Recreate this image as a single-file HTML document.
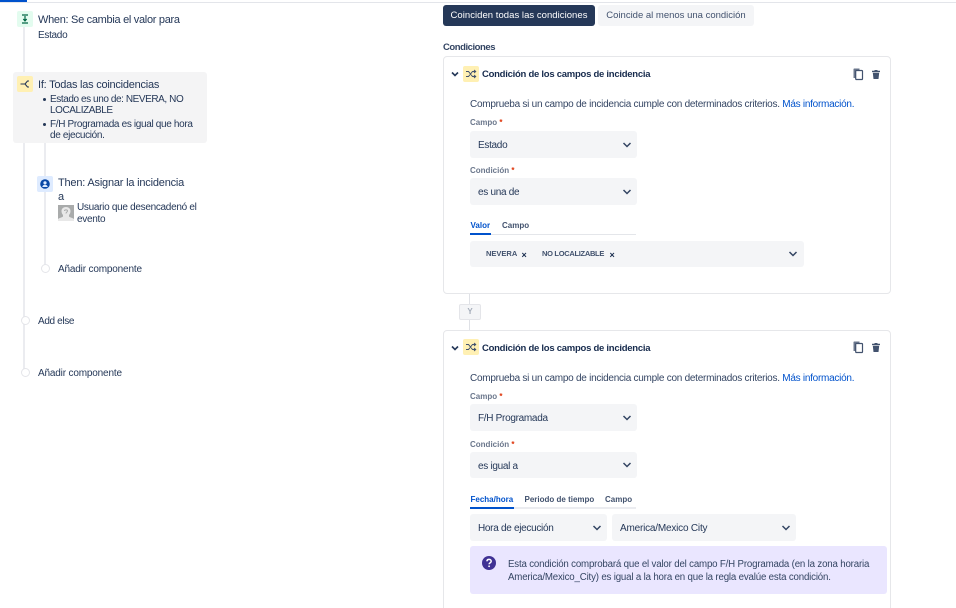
<!DOCTYPE html>
<html><head><meta charset="utf-8"><style>
html,body{margin:0;padding:0;background:#fff;height:608px;overflow:hidden}
body{width:956px;position:relative;font-family:"Liberation Sans",sans-serif;color:#253858;font-size:10px}
.a{position:absolute;white-space:nowrap}
.t{position:absolute;white-space:nowrap;line-height:12px}
.card{position:absolute;left:443px;width:448px;background:#fff;border:1px solid #e6e7ea;border-radius:4px;box-sizing:border-box}
.sel{position:absolute;background:#f4f5f7;border-radius:3px}
.sel span{position:absolute;left:8px;top:14px;line-height:12px;margin-top:-5.500px;font-size:10px;white-space:nowrap;color:#253858;letter-spacing:-.3px}
.sel svg{position:absolute;right:5px;top:50%;margin-top:-5px}
.lab{position:absolute;font-size:8px;font-weight:bold;color:#6b778c;white-space:nowrap;line-height:10px}
.lab i{color:#de350b;font-style:normal}
.ic{position:absolute;width:16px;height:16px;border-radius:2px}
.dot{position:absolute;width:7px;height:7px;border:1px solid #e4e5e9;border-radius:50%;background:#fff}
.line{position:absolute;background:#ebecf0}
</style></head><body>
<div class="a" style="left:0;top:2px;width:956px;height:1px;background:#e3e5ea"></div>
<div class="a" style="left:0;top:0;width:27px;height:2px;background:#0052cc"></div>

<div class="line" style="left:23px;top:20px;width:2px;height:352px"></div>
<div class="a" style="left:13px;top:72px;width:194px;height:71px;background:#f4f4f5;border-radius:3px"></div>
<div class="line" style="left:44px;top:143px;width:2px;height:125px"></div>

<div class="ic" style="left:17px;top:11px;background:#e3fcef"><svg width="16" height="16" viewBox="0 0 16 16"><path d="M5 4h6M5 12h6M8 5v5M6.300 8 8 10l1.700-2" fill="none" stroke="#006644" stroke-width="1.200"/></svg></div>
<div class="t" style="left:38px;top:14px;font-size:11px;letter-spacing:-.3px">When: Se cambia el valor para</div>
<div class="t" style="left:38px;top:29px;font-size:10px;letter-spacing:-.3px;margin-top:1px">Estado</div>

<div class="ic" style="left:17px;top:76px;background:#fff0b3"><svg width="16" height="16" viewBox="0 0 16 16"><path d="M3.500 8H8M8 8l2.500-3H12M8 8l2.500 3H12" fill="none" stroke="#253858" stroke-width="1.100"/></svg></div>
<div class="t" style="left:38px;top:79px;font-size:11px;letter-spacing:-.24px">If: Todas las coincidencias</div>
<div class="a" style="left:43px;top:98px;width:3px;height:3px;background:#253858;border-radius:50%"></div>
<div class="t" style="left:50px;top:94px;font-size:10px;line-height:11px;letter-spacing:-.42px">Estado es uno de: NEVERA, NO<br>LOCALIZABLE</div>
<div class="a" style="left:43px;top:123px;width:3px;height:3px;background:#253858;border-radius:50%"></div>
<div class="t" style="left:50px;top:119px;font-size:10px;line-height:11px;letter-spacing:-.34px">F/H Programada es igual que hora<br>de ejecución.</div>

<div class="ic" style="left:37px;top:176px;background:#deebff"><svg width="16" height="16" viewBox="0 0 16 16"><circle cx="8" cy="8" r="4.800" fill="#0747a6"/><circle cx="8" cy="6.800" r="1.600" fill="#deebff"/><path d="M5.300 11c.4-1.800 1.500-2.300 2.700-2.300s2.300.5 2.700 2.300z" fill="#deebff"/></svg></div>
<div class="t" style="left:58px;top:177px;font-size:11px;line-height:13.500px;letter-spacing:-.2px">Then: Asignar la incidencia<br>a</div>
<svg class="a" style="left:58px;top:205px" width="16" height="16" viewBox="0 0 16 16"><rect width="16" height="16" fill="#a9abab"/><path d="M0 16v-2c2-1.500 4-1.500 5-2.500V10C4 9 3.500 7.500 3.500 6 3.500 3.500 5.500 2 8 2s4.500 1.500 4.500 4c0 1.500-.5 3-1.500 4v1.500c1 1 3 1 5 2.500v2z" fill="#e8e8e8"/><path d="M6.500 6c0-1.500 3-1.500 3 0 0 1-1.500 1-1.500 2.500" fill="none" stroke="#a9abab"/></svg>
<div class="t" style="left:77px;top:202px;font-size:10px;line-height:11.500px;letter-spacing:-.3px">Usuario que desencadenó el<br>evento</div>

<div class="dot" style="left:41px;top:264px"></div>
<div class="t" style="left:58px;top:264px;font-size:10px;letter-spacing:-.17px">Añadir componente</div>
<div class="dot" style="left:21px;top:316px"></div>
<div class="t" style="left:38px;top:316px;font-size:10px;letter-spacing:-.35px">Add else</div>
<div class="dot" style="left:21px;top:368px"></div>
<div class="t" style="left:38px;top:368px;font-size:10px;letter-spacing:-.17px">Añadir componente</div>

<div class="a" style="left:443px;top:5px;width:152px;height:21px;background:#253858;border-radius:3px;color:#fff;font-size:9.500px;line-height:22px;text-align:center;letter-spacing:.04px">Coinciden todas las condiciones</div>
<div class="a" style="left:598px;top:5px;width:156px;height:21px;background:#f4f5f7;border-radius:3px;color:#42526e;font-size:9.500px;line-height:22px;text-align:center">Coincide al menos una condición</div>
<div class="t" style="left:443px;top:42px;font-size:9.500px;font-weight:bold;color:#344563;letter-spacing:-.45px">Condiciones</div>

<div class="card" style="top:56px;height:238px"></div>
<div class="line" style="left:469px;top:294px;width:1px;height:36px;background:#dfe1e6"></div>
<div class="a" style="left:459px;top:304px;width:22px;height:16px;box-sizing:border-box;background:#f4f5f7;border:1px solid #e4e5e9;border-radius:2px;font-size:8px;font-weight:bold;color:#a5adba;text-align:center;line-height:14px">Y</div>
<div class="card" style="top:330px;height:290px"></div>

<!-- card 1 -->
<svg class="a" style="left:451px;top:71px" width="8" height="6" viewBox="0 0 8 6"><path d="M1 1.500 4 4.500 7 1.500" fill="none" stroke="#253858" stroke-width="1.600"/></svg>
<div class="ic" style="left:463px;top:66px;background:#fff0b3"><svg width="16" height="16" viewBox="0 0 16 16"><path d="M3 5.500h2.500l4 5H12.500M3 10.500h2.500l4-5H12.500M11 4l1.700 1.500L11 7M11 9l1.700 1.500L11 12" fill="none" stroke="#42526e" stroke-width="1"/></svg></div>
<div class="t" style="left:482px;top:69px;font-size:9.500px;font-weight:bold;color:#172b4d;letter-spacing:-.26px">Condición de los campos de incidencia</div>
<svg class="a" style="left:852px;top:67px" width="12" height="14" viewBox="0 0 12 14"><path d="M2 1.500h5.500v1.500H3.500V11H1.500V2z" fill="#6b778c"/><rect x="3.700" y="3.500" width="6.800" height="9" rx=".8" fill="#fff" stroke="#42526e" stroke-width="1.200"/></svg>
<svg class="a" style="left:871px;top:69px" width="10" height="11" viewBox="0 0 10 11"><path d="M1 1.800h8v1.300H1zM3.500 1h3v1h-3zM1.800 3.700h6.400L7.500 10H2.500z" fill="#42526e"/></svg>
<div class="t" style="left:470px;top:99px;font-size:10px;color:#344563;letter-spacing:-.26px">Comprueba si un campo de incidencia cumple con determinados criterios. <span style="color:#0052cc">Más información.</span></div>
<div class="lab" style="left:470px;top:118px">Campo <i>*</i></div>
<div class="sel" style="left:470px;top:131px;width:167px;height:27px"><span>Estado</span><svg width="10" height="10" viewBox="0 0 10 10"><path d="M1.500 3 5 6.500 8.500 3" fill="none" stroke="#344563" stroke-width="1.500"/></svg></div>
<div class="lab" style="left:470px;top:166px">Condición <i>*</i></div>
<div class="sel" style="left:470px;top:178px;width:167px;height:27px"><span>es una de</span><svg width="10" height="10" viewBox="0 0 10 10"><path d="M1.500 3 5 6.500 8.500 3" fill="none" stroke="#344563" stroke-width="1.500"/></svg></div>
<div class="lab" style="left:470.500px;top:221px;color:#0052cc">Valor</div>
<div class="lab" style="left:502px;top:221px;color:#42526e">Campo</div>
<div class="a" style="left:470px;top:234px;width:166px;height:1px;background:#e4e6ea"></div>
<div class="a" style="left:470px;top:233px;width:21px;height:2px;background:#0052cc"></div>
<div class="sel" style="left:470px;top:241px;width:334px;height:26px"><svg width="10" height="10" viewBox="0 0 10 10" style="right:6px"><path d="M1.500 3 5 6.500 8.500 3" fill="none" stroke="#344563" stroke-width="1.500"/></svg></div>
<div class="lab" style="left:486px;top:249px;color:#42526e;font-size:7.500px">NEVERA</div>
<div class="lab" style="left:521.500px;top:250px;color:#172b4d;font-size:9px">×</div>
<div class="lab" style="left:542px;top:249px;color:#42526e;font-size:7.500px;letter-spacing:-.3px">NO LOCALIZABLE</div>
<div class="lab" style="left:609.500px;top:250px;color:#172b4d;font-size:9px">×</div>

<!-- card 2 -->
<svg class="a" style="left:451px;top:345px" width="8" height="6" viewBox="0 0 8 6"><path d="M1 1.500 4 4.500 7 1.500" fill="none" stroke="#253858" stroke-width="1.600"/></svg>
<div class="ic" style="left:463px;top:339px;background:#fff0b3"><svg width="16" height="16" viewBox="0 0 16 16"><path d="M3 5.500h2.500l4 5H12.500M3 10.500h2.500l4-5H12.500M11 4l1.700 1.500L11 7M11 9l1.700 1.500L11 12" fill="none" stroke="#42526e" stroke-width="1"/></svg></div>
<div class="t" style="left:482px;top:343px;font-size:9.500px;font-weight:bold;color:#172b4d;letter-spacing:-.26px">Condición de los campos de incidencia</div>
<svg class="a" style="left:852px;top:340px" width="12" height="14" viewBox="0 0 12 14"><path d="M2 1.500h5.500v1.500H3.500V11H1.500V2z" fill="#6b778c"/><rect x="3.700" y="3.500" width="6.800" height="9" rx=".8" fill="#fff" stroke="#42526e" stroke-width="1.200"/></svg>
<svg class="a" style="left:871px;top:342px" width="10" height="11" viewBox="0 0 10 11"><path d="M1 1.800h8v1.300H1zM3.500 1h3v1h-3zM1.800 3.700h6.400L7.500 10H2.500z" fill="#42526e"/></svg>
<div class="t" style="left:470px;top:373px;font-size:10px;color:#344563;letter-spacing:-.26px">Comprueba si un campo de incidencia cumple con determinados criterios. <span style="color:#0052cc">Más información.</span></div>
<div class="lab" style="left:470px;top:392px">Campo <i>*</i></div>
<div class="sel" style="left:470px;top:404px;width:167px;height:27px"><span>F/H Programada</span><svg width="10" height="10" viewBox="0 0 10 10"><path d="M1.500 3 5 6.500 8.500 3" fill="none" stroke="#344563" stroke-width="1.500"/></svg></div>
<div class="lab" style="left:470px;top:440px">Condición <i>*</i></div>
<div class="sel" style="left:470px;top:452px;width:167px;height:26px"><span>es igual a</span><svg width="10" height="10" viewBox="0 0 10 10"><path d="M1.500 3 5 6.500 8.500 3" fill="none" stroke="#344563" stroke-width="1.500"/></svg></div>
<div class="lab" style="left:470.500px;top:495px;color:#0052cc">Fecha/hora</div>
<div class="lab" style="left:524.500px;top:495px;color:#42526e">Periodo de tiempo</div>
<div class="lab" style="left:605px;top:495px;color:#42526e">Campo</div>
<div class="a" style="left:470px;top:507px;width:166px;height:2px;background:#ebecf0"></div>
<div class="a" style="left:470px;top:507px;width:44px;height:2px;background:#0052cc"></div>
<div class="sel" style="left:470px;top:514px;width:137px;height:27px"><span>Hora de ejecución</span><svg width="10" height="10" viewBox="0 0 10 10"><path d="M1.500 3 5 6.500 8.500 3" fill="none" stroke="#344563" stroke-width="1.500"/></svg></div>
<div class="sel" style="left:612px;top:514px;width:184px;height:27px"><span style="letter-spacing:-.2px">America/Mexico City</span><svg width="10" height="10" viewBox="0 0 10 10"><path d="M1.500 3 5 6.500 8.500 3" fill="none" stroke="#344563" stroke-width="1.500"/></svg></div>
<div class="a" style="left:470px;top:546px;width:417px;height:48px;background:#eae6ff;border-radius:3px"></div>
<svg class="a" style="left:482px;top:556px" width="14" height="14" viewBox="0 0 14 14"><circle cx="7" cy="7" r="7" fill="#403294"/><path d="M4.900 5.300C5 4 6 3.400 7 3.400c1.300 0 2.200.8 2.200 1.900 0 1.700-2.100 1.500-2.100 3" fill="none" stroke="#fff" stroke-width="1.500"/><circle cx="7.100" cy="10.300" r=".9" fill="#fff"/></svg>
<div class="t" style="left:508px;top:558px;font-size:9.700px;line-height:13px;color:#344563;letter-spacing:-.17px">Esta condición comprobará que el valor del campo F/H Programada (en la zona horaria<br>America/Mexico_City) es igual a la hora en que la regla evalúe esta condición.</div>
</body></html>
